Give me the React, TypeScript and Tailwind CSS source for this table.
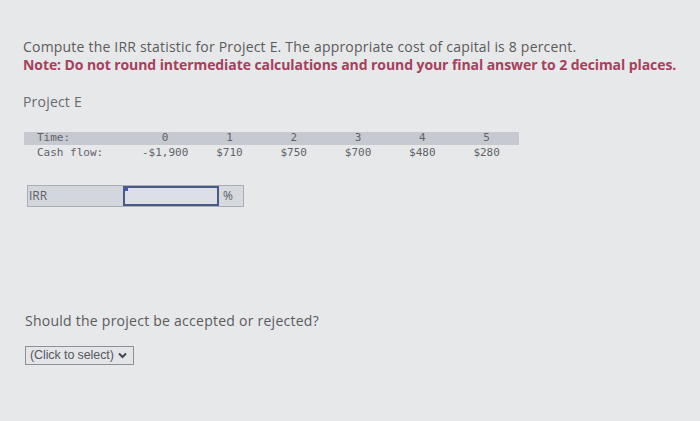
import React from "react";

const cols = [
  { t: "0", v: "-$1,900" },
  { t: "1", v: "$710" },
  { t: "2", v: "$750" },
  { t: "3", v: "$700" },
  { t: "4", v: "$480" },
  { t: "5", v: "$280" },
];

export default function App() {
  return (
    <div className="w-[700px] h-[421px] bg-[#e7e8ea] overflow-hidden" style={{ fontFamily: '"Open Sans", "Liberation Sans", sans-serif' }}>
      <div className="pl-[23px] pt-[38px] flex flex-col">
        <p className="text-[14px] leading-[18px] text-[#5b5b5b] tracking-[0.2px]">
          Compute the IRR statistic for Project E. The appropriate cost of capital is 8 percent.
        </p>
        <p className="text-[14px] leading-[18px] font-bold text-[#a8405c] tracking-[-0.08px]">
          Note: Do not round intermediate calculations and round your final answer to 2 decimal places.
        </p>
        <p className="mt-[19px] text-[14px] leading-[18px] text-[#6a6a6a] tracking-[0.2px]">Project E</p>

        <div className="mt-[21px] ml-[1px] w-[495px] text-[11px] text-[#5f6369]" style={{ fontFamily: '"DejaVu Sans Mono", "Liberation Mono", monospace' }}>
          <div className="flex h-[13px] items-center bg-[#c6cad0]">
            <div className="w-[109px] pl-[13px]">Time:</div>
            {cols.map((c) => (
              <div key={c.t} className="w-[64.3px] text-center">{c.t}</div>
            ))}
          </div>
          <div className="flex h-[16px] items-center">
            <div className="w-[109px] pl-[13px]">Cash flow:</div>
            {cols.map((c) => (
              <div key={c.t} className="w-[64.3px] text-center">{c.v}</div>
            ))}
          </div>
        </div>

        <div className="mt-[24px] ml-[4px] flex h-[22px] w-[217px] border border-[#a9adb5] text-[12px] text-[#5b5e66]">
          <div className="w-[95px] bg-[#d3d6dc] pl-[1px] flex items-center">IRR</div>
          <div className="relative w-[96px] border-2 border-[#4a5a86] bg-[#dcdfe5]">
            <div className="absolute left-0 top-0 h-[3px] w-[3px] bg-[#3b5bbf]" />
          </div>
          <div className="flex-1 bg-[#d6d9de] flex items-center pl-[4px]">%</div>
        </div>

        <p className="mt-[105px] ml-[2px] text-[14px] leading-[18px] text-[#5b5b5b] tracking-[0.25px]">
          Should the project be accepted or rejected?
        </p>

        <div className="mt-[16px] ml-[2px] flex h-[19px] w-[109px] items-center whitespace-nowrap border border-[#8e9096] bg-[#e4e5e8] pl-[4px] text-[12.5px] text-[#55585e]" style={{ fontFamily: '"Liberation Sans", Arial, sans-serif' }}>
          <span className="tracking-[-0.1px]">(Click to select)</span>
          <svg className="ml-[4px] shrink-0" width="9" height="7" viewBox="0 0 9 7">
            <path d="M1 1.5 L4.5 5 L8 1.5" stroke="#44474d" strokeWidth="2" fill="none" />
          </svg>
        </div>
      </div>
    </div>
  );
}
